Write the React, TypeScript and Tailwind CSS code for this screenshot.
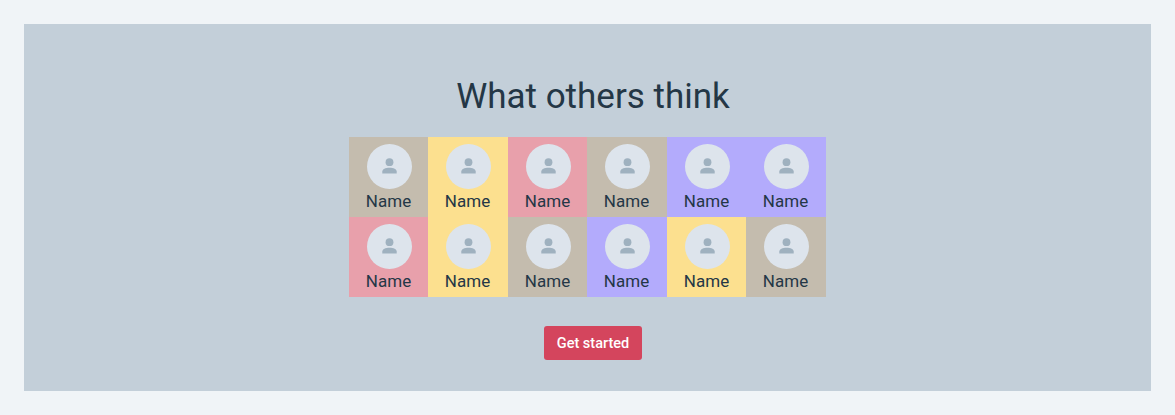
const tiles = [
  "bg-[#c4bcae] pl-px", "bg-[#fce08f]", "bg-[#e8a0ab] pl-px", "bg-[#c4bcae]", "bg-[#b3abfc] pl-px", "bg-[#b3abfc]",
  "bg-[#e8a0ab] pl-px", "bg-[#fce08f]", "bg-[#c4bcae] pl-px", "bg-[#b3abfc]", "bg-[#fce08f] pl-px", "bg-[#c4bcae]",
];

function Avatar() {
  return (
    <div className="flex h-[45px] w-[45px] items-center justify-center rounded-full bg-[#dde4ec]">
      <svg width="15" height="17" viewBox="0 0 15 17" fill="#9fb1bf">
        <circle cx="7.5" cy="4.2" r="3.9" />
        <path d="M0.3 13.5C0.3 11 3.5 9.7 7.5 9.7S14.7 11 14.7 13.5V15.6H0.3Z" />
      </svg>
    </div>
  );
}

export default function App() {
  return (
    <div className="h-[415px] bg-[#f0f4f7] p-6 font-['Roboto',sans-serif]">
      <div className="flex h-[367px] flex-col items-center bg-[#c3cfd9] pt-[50px]">
        <h1 className="ml-[11px] text-[35px] font-normal leading-[46px] text-[#243746]">
          What others think
        </h1>
        <div className="mt-[17px] grid w-[477px] grid-cols-[79px_80px_79px_80px_79px_80px]">
          {tiles.map((bg, i) => (
            <div key={i} className={`flex h-20 flex-col items-center pt-[7px] ${bg}`}>
              <Avatar />
              <span className="pr-px text-[17px] leading-6 text-[#243746]">Name</span>
            </div>
          ))}
        </div>
        <button className="ml-[11px] mt-[29px] h-[34px] w-[98px] rounded-[3px] bg-[#d4455d] pt-px text-[14.5px] font-medium text-white">
          Get started
        </button>
      </div>
    </div>
  );
}
